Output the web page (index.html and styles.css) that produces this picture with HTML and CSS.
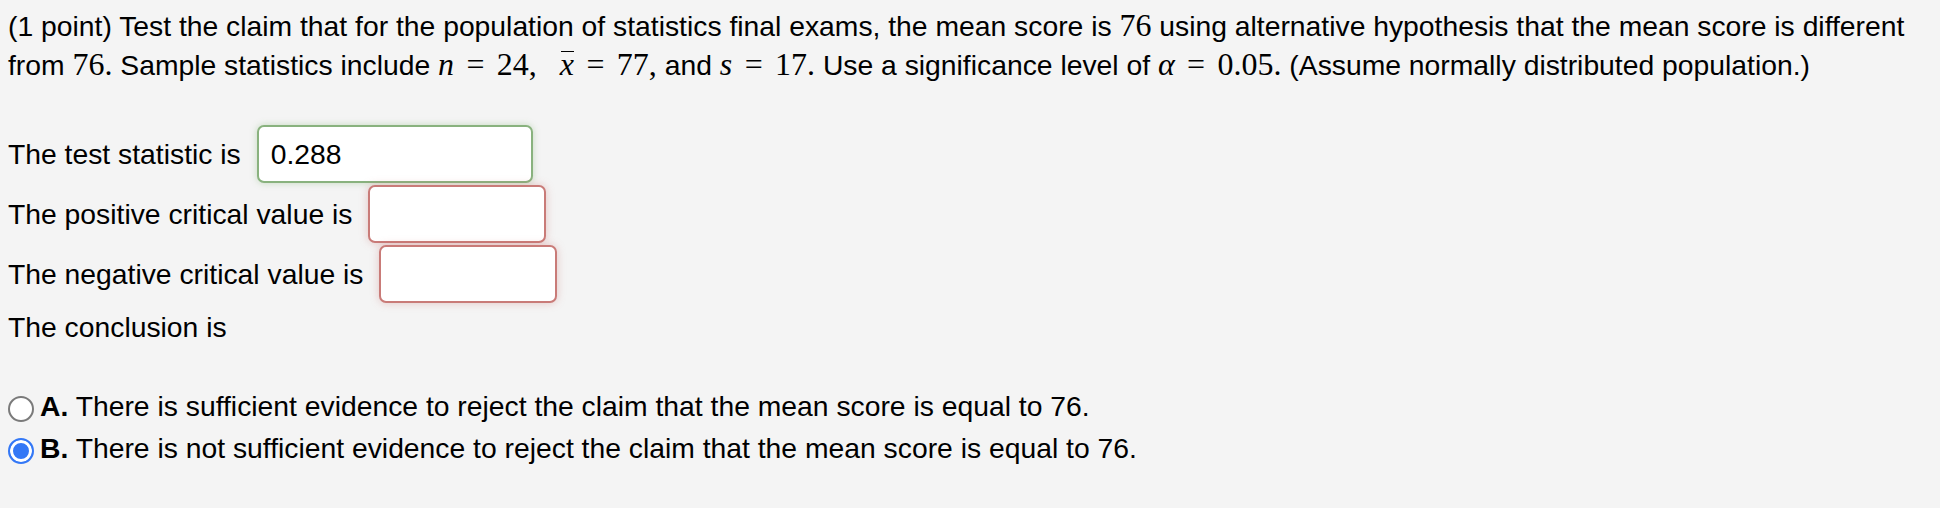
FILE: index.html
```html
<!DOCTYPE html>
<html lang="en">
<head>
<meta charset="utf-8">
<title>Hypothesis test</title>
<link rel="stylesheet" href="styles.css">
</head>
<body>
<div class="problem">
  <p class="statement">(1 point) Test the claim that for the population of statistics final exams, the mean score is <span class="math">76</span> using alternative hypothesis that the mean score is different from <span class="math">76.</span> Sample statistics include <span class="math"><i>n</i><span class="rel">=</span>24,<span class="gap"></span><i class="xbar">x</i><span class="rel">=</span>77,</span> and <span class="math"><i>s</i><span class="rel">=</span>17.</span> Use a significance level of <span class="math"><i>α</i><span class="rel">=</span>0.05.</span> (Assume normally distributed population.)</p>

  <div class="answers">
    <div class="row">
      <span class="label">The test statistic is</span>
      <input class="field field-ok field-wide" type="text" value="0.288">
    </div>
    <div class="row">
      <span class="label">The positive critical value is</span>
      <input class="field field-bad" type="text" value="">
    </div>
    <div class="row">
      <span class="label">The negative critical value is</span>
      <input class="field field-bad" type="text" value="">
    </div>
    <div class="conclusion">The conclusion is</div>
  </div>

  <div class="options">
    <label class="option">
      <input class="radio" type="radio" name="concl">
      <span><b>A.</b> There is sufficient evidence to reject the claim that the mean score is equal to 76.</span>
    </label>
    <label class="option">
      <input class="radio" type="radio" name="concl" checked>
      <span><b>B.</b> There is not sufficient evidence to reject the claim that the mean score is equal to 76.</span>
    </label>
  </div>
</div>
</body>
</html>
```

FILE: styles.css
```css
html, body {
  margin: 0;
  padding: 0;
  background: #f4f4f4;
}

body {
  font-family: "Liberation Sans", Arial, Helvetica, sans-serif;
  font-size: 28.3px;
  color: #000;
}

.problem {
  padding: 7px 8px 0 8px;
}

.statement {
  margin: 0;
  line-height: 39px;
}

.math {
  font-family: "Liberation Serif", "Times New Roman", serif;
  font-size: 1.13em;
  line-height: 1;
}

.math i {
  font-style: italic;
}

.rel {
  display: inline-block;
  width: 0.78em;
  margin: 0 0.28em;
  text-align: center;
}

.gap {
  display: inline-block;
  width: 0.72em;
}

.xbar {
  position: relative;
  display: inline-block;
}

.xbar::before {
  content: "";
  position: absolute;
  left: 1px;
  right: 0;
  top: 0.06em;
  height: 1.5px;
  background: #000;
}

.answers {
  margin-top: 39px;
}

.row {
  display: flex;
  align-items: center;
  height: 60px;
}

.label {
  white-space: nowrap;
}

.field {
  box-sizing: border-box;
  height: 58px;
  width: 178px;
  margin-left: 16px;
  padding: 0 12px;
  border-radius: 7px;
  background: #fff;
  font-family: "Liberation Sans", Arial, Helvetica, sans-serif;
  font-size: 28.3px;
  color: #000;
  outline: none;
}

.field-wide {
  width: 276px;
}

.field-ok {
  border: 2px solid #89b27e;
  box-shadow: 0 0 7px rgba(110, 170, 95, 0.35);
}

.field-bad {
  border: 2px solid #c97b78;
  box-shadow: 0 0 8px rgba(200, 110, 105, 0.35);
}

.conclusion {
  margin-top: 4px;
  line-height: 38px;
}

.options {
  margin-top: 39px;
  display: flex;
  flex-direction: column;
}

.option {
  display: flex;
  align-items: center;
  height: 42px;
  white-space: nowrap;
}

.radio {
  appearance: none;
  -webkit-appearance: none;
  box-sizing: border-box;
  width: 26px;
  height: 26px;
  margin: 6px 6px 0 0;
  border-radius: 50%;
  border: 2px solid #7a7a7a;
  background: #fff;
  flex: none;
}

.radio:checked {
  border: 2px solid #3478f6;
  background: #3478f6;
  box-shadow: inset 0 0 0 3px #fff;
}
```
